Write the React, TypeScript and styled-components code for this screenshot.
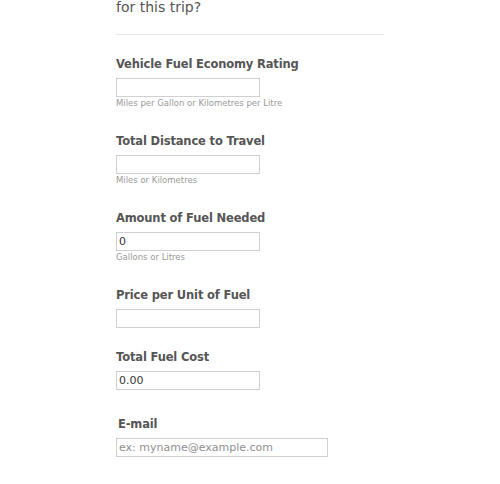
import React from 'react'
import styled, { createGlobalStyle } from 'styled-components'

const LookAndFeel = createGlobalStyle`
  html, body {
    margin: 0;
    padding: 0;
    background: #ffffff;
  }
  body {
    font-family: Verdana, "DejaVu Sans", sans-serif;
    color: #555555;
  }
`

const Form = styled.form`
  width: 268px;
  margin: 0 auto;
`

const Heading = styled.div`
  font-size: 14px;
  line-height: 18px;
  margin-top: -2px;
  color: #555555;
`

const Divider = styled.div`
  margin-top: 18px;
  border-bottom: 1px solid #e6e6e6;
`

const Field = styled.div<{ $first?: boolean; $shift?: number }>`
  margin-top: ${p => (p.$first ? 22 : 22 + (p.$shift ?? 0))}px;
  padding-left: ${p => (p.$shift ? 2 : 0)}px;
`

const Label = styled.label`
  display: block;
  font-size: 11.5px;
  line-height: 14px;
  letter-spacing: -0.15px;
  margin-bottom: 7px;
  font-weight: bold;
  color: #555555;
`

const Input = styled.input<{ $wide?: boolean }>`
  display: block;
  box-sizing: border-box;
  width: ${p => (p.$wide ? 212 : 144)}px;
  height: 19px;
  margin: 0 0 0 ${p => (p.$wide ? -2 : 0)}px;
  padding: 0 2px;
  border: 1px solid #d0d0d0;
  border-radius: 0;
  font-family: Verdana, "DejaVu Sans", sans-serif;
  font-size: 11px;
  color: #333333;
  background: #ffffff;
  outline: none;

  &::placeholder {
    color: #8f8f8f;
  }
`

const Hint = styled.div`
  font-size: 8.5px;
  line-height: 12px;
  padding-bottom: 3px;
  color: #9a9a9a;
`

const App = () => {
  return (
    <>
      <LookAndFeel />
      <Form>
        <Heading>for this trip?</Heading>
        <Divider />

        <Field $first>
          <Label>Vehicle Fuel Economy Rating</Label>
          <Input type="text" />
          <Hint>Miles per Gallon or Kilometres per Litre</Hint>
        </Field>

        <Field>
          <Label>Total Distance to Travel</Label>
          <Input type="text" />
          <Hint>Miles or Kilometres</Hint>
        </Field>

        <Field>
          <Label>Amount of Fuel Needed</Label>
          <Input type="text" defaultValue="0" />
          <Hint>Gallons or Litres</Hint>
        </Field>

        <Field>
          <Label>Price per Unit of Fuel</Label>
          <Input type="text" />
        </Field>

        <Field>
          <Label>Total Fuel Cost</Label>
          <Input type="text" defaultValue="0.00" />
        </Field>

        <Field $shift={5}>
          <Label>E-mail</Label>
          <Input type="email" $wide placeholder="ex: myname@example.com" />
        </Field>
      </Form>
    </>
  )
}

export default App
